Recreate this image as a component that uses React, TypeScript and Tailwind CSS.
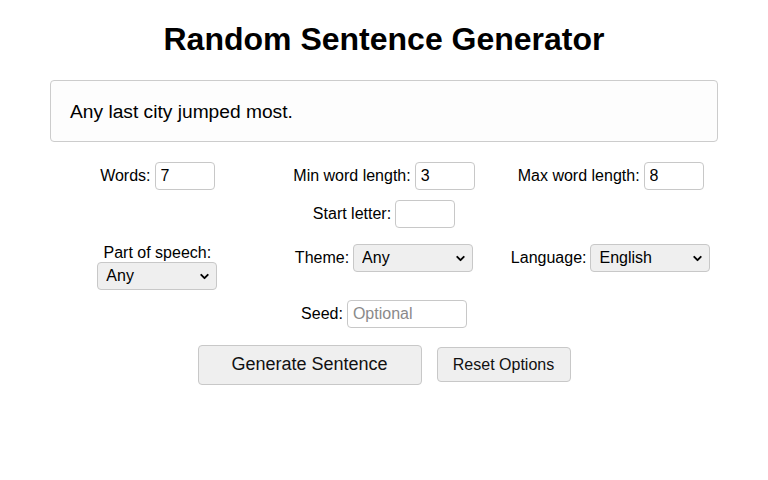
import React, { useState } from 'react';
import { ChevronDown } from 'lucide-react';

// 输入框与下拉框的公共样式
const inputCls =
    'w-[60px] h-[28px] border border-[#c8c8c8] rounded-[4px] bg-white pl-[5px] text-[16px] text-black outline-none placeholder:text-[#8a8a8a]';

const Select: React.FC<{ value: string; options: string[]; onChange: (v: string) => void }> = ({
    value,
    options,
    onChange,
}) => (
    <div className="relative w-[120px] h-[28px]">
        <select
            value={value}
            onChange={e => onChange(e.target.value)}
            className="appearance-none w-full h-full border border-[#c8c8c8] rounded-[4px] bg-[#efefef] pl-[8px] text-[16px] text-black outline-none"
        >
            {options.map(o => (
                <option key={o}>{o}</option>
            ))}
        </select>
        <ChevronDown
            size={13}
            strokeWidth={3.5}
            className="absolute right-[6px] top-[8px] pointer-events-none text-black"
        />
    </div>
);

export default function App() {
    const [words, setWords] = useState('7');
    const [minLen, setMinLen] = useState('3');
    const [maxLen, setMaxLen] = useState('8');
    const [startLetter, setStartLetter] = useState('');
    const [pos, setPos] = useState('Any');
    const [theme, setTheme] = useState('Any');
    const [lang, setLang] = useState('English');
    const [seed, setSeed] = useState('');

    return (
        <div
            className="min-h-[480px] bg-white text-black px-[50px]"
            style={{ fontFamily: '"Liberation Sans", Arial, sans-serif' }}
        >
            <h1 className="text-[32px] font-bold text-center my-[21.44px] leading-[37px]">
                Random Sentence Generator
            </h1>

            {/* 生成结果 */}
            <div className="border border-[#cccccc] rounded-[4px] bg-[#fdfdfd] pl-[19px] pr-[20px] pt-[20px] pb-[18px] text-[19.2px] leading-[22px]">
                Any last city jumped most.
            </div>

            {/* 选项 */}
            <div className="grid grid-cols-3 gap-x-[12px] gap-y-[10px] mt-[20px] text-[16px]">
                <label className="flex items-center justify-center gap-[4px]">
                    Words:
                    <input className={inputCls} value={words} onChange={e => setWords(e.target.value)} />
                </label>
                <label className="flex items-center justify-center gap-[4px]">
                    Min word length:
                    <input className={inputCls} value={minLen} onChange={e => setMinLen(e.target.value)} />
                </label>
                <label className="flex items-center justify-center gap-[4px]">
                    Max word length:
                    <input className={inputCls} value={maxLen} onChange={e => setMaxLen(e.target.value)} />
                </label>
                <label className="col-start-2 flex items-center justify-center gap-[4px]">
                    Start letter:
                    <input
                        className={inputCls}
                        value={startLetter}
                        onChange={e => setStartLetter(e.target.value)}
                    />
                </label>

                <label className="col-start-1 mt-[6px] flex flex-col items-center leading-[18px]">
                    Part of speech:
                    <Select value={pos} options={['Any', 'Noun', 'Verb', 'Adjective', 'Adverb']} onChange={setPos} />
                </label>
                <label className="mt-[6px] flex items-start justify-center gap-[4px]">
                    <span className="leading-[28px]">Theme:</span>
                    <Select value={theme} options={['Any', 'Nature', 'City', 'Science']} onChange={setTheme} />
                </label>
                <label className="mt-[6px] flex items-start justify-center gap-[4px]">
                    <span className="leading-[28px]">Language:</span>
                    <Select value={lang} options={['English', 'Spanish', 'French']} onChange={setLang} />
                </label>

                <label className="col-start-2 flex items-center justify-center gap-[4px]">
                    Seed:
                    <input
                        className={`${inputCls} !w-[120px]`}
                        placeholder="Optional"
                        value={seed}
                        onChange={e => setSeed(e.target.value)}
                    />
                </label>
            </div>

            {/* 按钮 */}
            <div className="flex items-center justify-center gap-[15px] mt-[17px]">
                <button className="w-[224px] h-[40px] border border-[#c8c8c8] rounded-[4px] bg-[#efefef] text-[18px] text-[#111]">
                    Generate Sentence
                </button>
                <button className="w-[134px] h-[35px] border border-[#c8c8c8] rounded-[4px] bg-[#efefef] text-[16px] text-[#111]">
                    Reset Options
                </button>
            </div>
        </div>
    );
}
